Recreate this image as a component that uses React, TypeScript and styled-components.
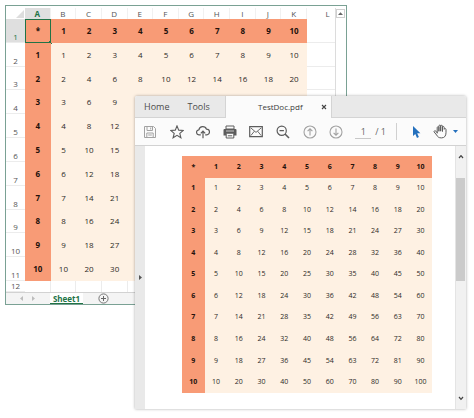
import React from 'react';
import styled, { createGlobalStyle } from 'styled-components';

const GlobalStyle = createGlobalStyle`
  *, *::before, *::after { box-sizing: border-box; }
  body {
    margin: 0;
    background: #ffffff;
    font-family: 'Open Sans', 'Noto Sans', sans-serif;
    color: #3c3c3c;
  }
  button, input { font: inherit; color: inherit; background: none; border: 0; padding: 0; margin: 0; }
  table { border-collapse: separate; border-spacing: 0; table-layout: fixed; }
  th, td { padding: 0; }
`;

const salmon = '#f89b76';
const cream = '#fef1e3';
const green = '#217346';
const line = '#ececec';

const numbers = Array.from({ length: 10 }, (_, i) => i + 1);
const letters = 'ABCDEFGHIJK'.split('');

const Desktop = styled.main`
  display: grid;
  align-items: start;
  > * { grid-area: 1 / 1; }
`;

/* ---------- spreadsheet window ---------- */

const SheetWindow = styled.section`
  margin: 5px 127px 0 5px;
  padding-top: 2px;
  background: #ffffff;
  border: 1px solid #7aa194;
`;

const SheetBody = styled.div`
  display: flex;
`;

const SheetTable = styled.table`
  width: 100%;
  height: 284px;
  font-size: 8px;
  line-height: 10px;
  text-align: center;
`;

const NarrowCol = styled.col`
  width: 19px;
`;

const LastCol = styled.col`
  width: 28px;
`;

const Row = styled.tr<{ $height?: number }>`
  ${(p) => (p.$height ? `height: ${p.$height}px;` : '')}
`;

const ColumnHead = styled.th<{ $active?: boolean }>`
  font-weight: ${(p) => (p.$active ? 700 : 400)};
  color: ${(p) => (p.$active ? green : '#555555')};
  background: ${(p) => (p.$active ? '#dfdfdf' : '#ffffff')};
  border-right: 1px solid #f1f1f1;
`;

const CornerHead = styled.td`
  text-align: right;
  svg { display: block; margin-left: auto; margin-right: 1px; }
`;

const LastColumnHead = styled(ColumnHead)`
  padding-left: 13px;
  border-right: 0;
`;

const RowHead = styled.th<{ $active?: boolean }>`
  vertical-align: bottom;
  font-weight: 400;
  color: ${(p) => (p.$active ? green : '#555555')};
  background: ${(p) => (p.$active ? '#dfdfdf' : '#ffffff')};
  border-bottom: 1px solid ${line};
`;

const HeadCell = styled.th<{ $selected?: boolean }>`
  position: relative;
  font-weight: 700;
  color: #24120c;
  background: ${salmon};
  ${(p) =>
    p.$selected
      ? `
    outline: 1px solid ${green};
    outline-offset: -1px;
    &::after {
      content: '';
      position: absolute;
      right: -1px;
      bottom: -1px;
      width: 3px;
      height: 3px;
      background: ${green};
    }`
      : ''}
`;

const ValueCell = styled.td`
  background: ${cream};
  color: #2c2926;
`;

const BlankCell = styled.td`
  border-bottom: 1px solid ${line};
`;

const BottomCell = styled.td`
  border-right: 1px solid ${line};
`;

const SheetScroll = styled.div`
  flex: none;
  width: 11px;
  padding-top: 1px;
  border-left: 1px solid #dcdcdc;
`;

const SheetScrollButton = styled.button`
  display: flex;
  align-items: center;
  justify-content: center;
  width: 9px;
  height: 9px;
  border: 1px solid #cfcfcf;
`;

const SheetFooter = styled.footer`
  display: flex;
  align-items: stretch;
  height: 12px;
  background: #f4f4f4;
  border-top: 1px solid #d2d2d2;
  padding-left: 9px;
`;

const FooterButton = styled.button`
  display: flex;
  align-items: center;
  justify-content: center;
  width: 12px;
`;

const SheetTab = styled.button`
  width: 33px;
  margin: 0 14px 0 11px;
  font-size: 8px;
  line-height: 9px;
  font-weight: 700;
  color: ${green};
  background: #ffffff;
  border-bottom: 1px solid ${green};
`;

/* ---------- document viewer window ---------- */

const ViewerWindow = styled.section`
  z-index: 1;
  margin: 96px 8px 9px 135px;
  background: #ffffff;
  border-radius: 2px 2px 0 0;
  box-shadow: 0 0 3px rgba(0, 0, 0, 0.35);
  overflow: hidden;
`;

const TabBar = styled.nav`
  display: flex;
  height: 22px;
  background: #e9e9e9;
`;

const MenuTabs = styled.div`
  display: flex;
  width: 91px;
  padding-left: 9px;
  gap: 18px;
  border-right: 1px solid #d4d4d4;
  border-bottom: 1px solid #d4d4d4;
`;

const MenuTab = styled.button`
  font-size: 9px;
  line-height: 12px;
  color: #4c4c4c;
`;

const DocumentTab = styled.div`
  display: flex;
  align-items: center;
  justify-content: space-between;
  width: 106px;
  padding: 0 4px 0 32px;
  background: #fbfbfb;
  border-right: 1px solid #d4d4d4;
`;

const DocumentName = styled.button`
  font-size: 8px;
  line-height: 12px;
  color: #3a3a3a;
`;

const CloseButton = styled.button`
  display: flex;
`;

const TabFill = styled.div`
  flex: 1;
  border-bottom: 1px solid #d4d4d4;
`;

const Toolbar = styled.div`
  display: flex;
  align-items: center;
  height: 28px;
  padding: 0 8px;
  background: #fbfbfb;
  border-bottom: 1px solid #d2d2d2;
`;

const ToolGroup = styled.div`
  display: flex;
  flex: 1;
  justify-content: space-between;
`;

const ToolButton = styled.button<{ $muted?: boolean }>`
  display: flex;
  align-items: center;
  justify-content: center;
  color: ${(p) => (p.$muted ? '#a2a2a2' : '#5c5c5c')};
  svg { display: block; }
`;

const PageLabel = styled.label`
  display: flex;
  align-items: center;
  gap: 4px;
  margin-left: 12px;
  font-size: 9px;
  color: #666666;
`;

const PageInput = styled.input`
  width: 16px;
  height: 15px;
  text-align: center;
  border-bottom: 1px solid #c8c8c8;
`;

const Divider = styled.div`
  width: 1px;
  height: 17px;
  margin: 0 15px 0 10px;
  background: #d0d0d0;
`;

const PointerTools = styled.div`
  display: flex;
  align-items: center;
  gap: 12px;
`;

const HandTools = styled.div`
  display: flex;
  align-items: center;
  gap: 5px;
`;

const ViewerBody = styled.div`
  display: flex;
`;

const SidePanel = styled.button`
  display: flex;
  align-items: center;
  justify-content: center;
  width: 10px;
  background: #e9e9e9;
`;

const PageArea = styled.div`
  flex: 1;
  padding: 10px 23px 16px 37px;
`;

const PageTable = styled.table`
  width: 100%;
  height: 237px;
  font-size: 7px;
  line-height: 10px;
  text-align: center;
`;

const ViewerScroll = styled.div`
  display: flex;
  flex-direction: column;
  width: 11px;
  padding-right: 1px;
  background: #f1f1f1;
  border-left: 1px solid #e4e4e4;
`;

const ScrollArrow = styled.button`
  display: flex;
  align-items: center;
  justify-content: center;
  height: 21px;
`;

const ScrollThumb = styled.div`
  height: 103px;
  margin: 11px 0 auto;
  background: #cbcbcb;
`;

/* ---------- icons ---------- */

const Icon = ({ children, w = 14, h = 14 }: { children: React.ReactNode; w?: number; h?: number }) => (
  <svg width={w} height={h} viewBox={`0 0 ${w} ${h}`} fill="none" stroke="currentColor" strokeWidth="1" aria-hidden="true">
    {children}
  </svg>
);

const SaveIcon = () => (
  <Icon>
    <path d="M1.5 1.5h9l2 2v9h-11z M4 1.5v4h5.5v-4 M7.7 2.5v2 M3.8 12.5v-4.5h6.4v4.5 M5.2 10h3.6" />
  </Icon>
);

const StarIcon = () => (
  <Icon>
    <path d="M7 .9l1.7 4.2 4.6.3-3.5 3 1.1 4.4L7 10.4l-3.9 2.4 1.1-4.4-3.5-3 4.6-.3z" strokeWidth="1.1" />
  </Icon>
);

const CloudIcon = () => (
  <Icon>
    <path d="M4.8 9.8H3.2a2.5 2.5 0 0 1-.3-5A4 4 0 0 1 10.5 4.2a2.8 2.8 0 0 1 .3 5.6H9.2 M7 13.3V6.2 M4.8 8.3L7 6l2.2 2.3" strokeWidth="1.2" />
  </Icon>
);

const PrintIcon = () => (
  <Icon>
    <path d="M3 1h8v3H3z" fill="#fbfbfb" />
    <path d="M1.5 4h11a1 1 0 0 1 1 1v5.5h-13V5a1 1 0 0 1 1-1z" fill="currentColor" stroke="none" />
    <path d="M3.2 8.2h7.6v4.8H3.2z" fill="#fbfbfb" />
    <path d="M4.8 10.8h4.4" />
    <path d="M3 6h8" stroke="#c6c6c6" />
  </Icon>
);

const MailIcon = () => (
  <Icon>
    <path d="M.7 1.6h12.6v10H.7z" strokeWidth="1.2" />
    <path d="M1.8 2.9L7 7.4l5.2-4.5 M1.8 10.6l3.6-4.4 M12.2 10.6L8.6 6.2" strokeWidth=".9" />
  </Icon>
);

const ZoomOutIcon = () => (
  <Icon>
    <circle cx="5.7" cy="5.7" r="4.6" strokeWidth="1.2" />
    <path d="M3.5 5.7h4.4" strokeWidth="1.2" />
    <path d="M9 9l4 4" strokeWidth="1.6" />
  </Icon>
);

const CircleArrow = ({ down = false }: { down?: boolean }) => (
  <Icon>
    <circle cx="7" cy="7" r="6" strokeWidth="1.1" />
    <path d={down ? 'M7 3.6v6.6 M4.6 7.8L7 10.2l2.4-2.4' : 'M7 10.4V3.8 M4.6 6.2L7 3.8l2.4 2.4'} strokeWidth="1.1" />
  </Icon>
);

const PointerIcon = () => (
  <Icon w={9} h={14}>
    <path d="M1 1v10l2.3-2.1 1.7 4 1.9-.8-1.7-3.9h3.2z" fill="#2470bd" stroke="none" />
  </Icon>
);

const HandIcon = () => (
  <Icon w={15} h={15}>
    <path
      d="M4.2 9V3.6c0-1.2 1.7-1.2 1.7 0V7 M5.9 6.8V2c0-1.2 1.8-1.2 1.8 0v4.8 M7.7 6.8V2.2c0-1.2 1.8-1.2 1.8 0v5 M9.5 7V3.4c0-1.2 1.7-1.2 1.7 0v1.9c.2-1.1 1.8-1 1.8.2v3.2c0 3.2-1.5 5.2-4.6 5.2-2.6 0-3.7-1-4.7-2.8L1.2 8c-.6-1 .8-1.8 1.6-.9l1.4 1.7"
      strokeLinecap="round"
      strokeLinejoin="round"
    />
  </Icon>
);

const Triangle = ({ dir, color }: { dir: 'up' | 'down' | 'left' | 'right'; color: string }) => {
  const paths = {
    up: 'M0 4h5L2.5 1.2z',
    down: 'M0 1h5L2.5 4z',
    left: 'M4 0v5L1 2.5z',
    right: 'M1 0v5l3-2.5z',
  };
  return (
    <svg width="5" height="5" viewBox="0 0 5 5" aria-hidden="true">
      <path d={paths[dir]} fill={color} />
    </svg>
  );
};

const Chevron = ({ down = false }: { down?: boolean }) => (
  <Icon w={6} h={5}>
    <path d={down ? 'M1 1l2 2.4L5 1' : 'M1 4l2-2.4L5 4'} stroke="#444444" strokeWidth="1.2" />
  </Icon>
);

/* ---------- page ---------- */

const Spreadsheet = () => (
  <SheetWindow aria-label="Spreadsheet">
    <SheetBody>
      <SheetTable>
        <colgroup>
          <NarrowCol />
          {letters.map((l) => (
            <col key={l} />
          ))}
          <LastCol />
        </colgroup>
        <thead>
          <Row $height={11}>
            <CornerHead>
              <svg width="8" height="8" viewBox="0 0 8 8" aria-hidden="true">
                <path d="M8 0v8H0z" fill="#dddddd" />
              </svg>
            </CornerHead>
            {letters.map((l, i) => (
              <ColumnHead key={l} scope="col" $active={i === 0}>
                {l}
              </ColumnHead>
            ))}
            <LastColumnHead scope="col">L</LastColumnHead>
          </Row>
        </thead>
        <tbody>
          <Row>
            <RowHead scope="row" $active>1</RowHead>
            <HeadCell $selected>*</HeadCell>
            {numbers.map((n) => (
              <HeadCell key={n}>{n}</HeadCell>
            ))}
            <BlankCell />
          </Row>
          {numbers.map((r) => (
            <Row key={r}>
              <RowHead scope="row">{r + 1}</RowHead>
              <HeadCell>{r}</HeadCell>
              {numbers.map((c) => (
                <ValueCell key={c}>{r * c}</ValueCell>
              ))}
              <BlankCell />
            </Row>
          ))}
          <Row $height={11}>
            <RowHead scope="row">12</RowHead>
            {letters.map((l) => (
              <BottomCell key={l} />
            ))}
            <BottomCell />
          </Row>
        </tbody>
      </SheetTable>
      <SheetScroll>
        <SheetScrollButton aria-label="Scroll up">
          <Triangle dir="up" color="#666666" />
        </SheetScrollButton>
      </SheetScroll>
    </SheetBody>
    <SheetFooter>
      <FooterButton aria-label="Previous sheet">
        <Triangle dir="left" color="#bdbdbd" />
      </FooterButton>
      <FooterButton aria-label="Next sheet">
        <Triangle dir="right" color="#bdbdbd" />
      </FooterButton>
      <SheetTab>Sheet1</SheetTab>
      <FooterButton aria-label="Add sheet">
        <Icon w={11} h={11}>
          <circle cx="5.5" cy="5.5" r="4.6" stroke="#777777" />
          <path d="M5.5 3v5 M3 5.5h5" stroke="#666666" />
        </Icon>
      </FooterButton>
    </SheetFooter>
  </SheetWindow>
);

const Viewer = () => (
  <ViewerWindow aria-label="Document viewer">
    <TabBar>
      <MenuTabs>
        <MenuTab>Home</MenuTab>
        <MenuTab>Tools</MenuTab>
      </MenuTabs>
      <DocumentTab>
        <DocumentName>TestDoc.pdf</DocumentName>
        <CloseButton aria-label="Close tab">
          <Icon w={6} h={6}>
            <path d="M1 1l4 4M5 1L1 5" stroke="#444444" strokeWidth="1.1" />
          </Icon>
        </CloseButton>
      </DocumentTab>
      <TabFill />
    </TabBar>
    <Toolbar>
      <ToolGroup>
        <ToolButton aria-label="Save" $muted><SaveIcon /></ToolButton>
        <ToolButton aria-label="Favorite"><StarIcon /></ToolButton>
        <ToolButton aria-label="Upload"><CloudIcon /></ToolButton>
        <ToolButton aria-label="Print"><PrintIcon /></ToolButton>
        <ToolButton aria-label="Email"><MailIcon /></ToolButton>
        <ToolButton aria-label="Zoom out"><ZoomOutIcon /></ToolButton>
        <ToolButton aria-label="Previous page" $muted><CircleArrow /></ToolButton>
        <ToolButton aria-label="Next page" $muted><CircleArrow down /></ToolButton>
      </ToolGroup>
      <PageLabel>
        <PageInput defaultValue="1" aria-label="Page number" />
        <span>/ 1</span>
      </PageLabel>
      <Divider />
      <PointerTools>
        <ToolButton aria-label="Select"><PointerIcon /></ToolButton>
        <HandTools>
          <ToolButton aria-label="Pan"><HandIcon /></ToolButton>
          <ToolButton aria-label="More pointer tools"><Triangle dir="down" color="#2470bd" /></ToolButton>
        </HandTools>
      </PointerTools>
    </Toolbar>
    <ViewerBody>
      <SidePanel aria-label="Open side panel">
        <Triangle dir="right" color="#555555" />
      </SidePanel>
      <PageArea>
        <PageTable>
          <tbody>
            <Row>
              <HeadCell>*</HeadCell>
              {numbers.map((n) => (
                <HeadCell key={n} scope="col">{n}</HeadCell>
              ))}
            </Row>
            {numbers.map((r) => (
              <Row key={r}>
                <HeadCell scope="row">{r}</HeadCell>
                {numbers.map((c) => (
                  <ValueCell key={c}>{r * c}</ValueCell>
                ))}
              </Row>
            ))}
          </tbody>
        </PageTable>
      </PageArea>
      <ViewerScroll>
        <ScrollArrow aria-label="Scroll up"><Chevron /></ScrollArrow>
        <ScrollThumb />
        <ScrollArrow aria-label="Scroll down"><Chevron down /></ScrollArrow>
      </ViewerScroll>
    </ViewerBody>
  </ViewerWindow>
);

export default function App() {
  return (
    <>
      <GlobalStyle />
      <Desktop>
        <Spreadsheet />
        <Viewer />
      </Desktop>
    </>
  );
}
